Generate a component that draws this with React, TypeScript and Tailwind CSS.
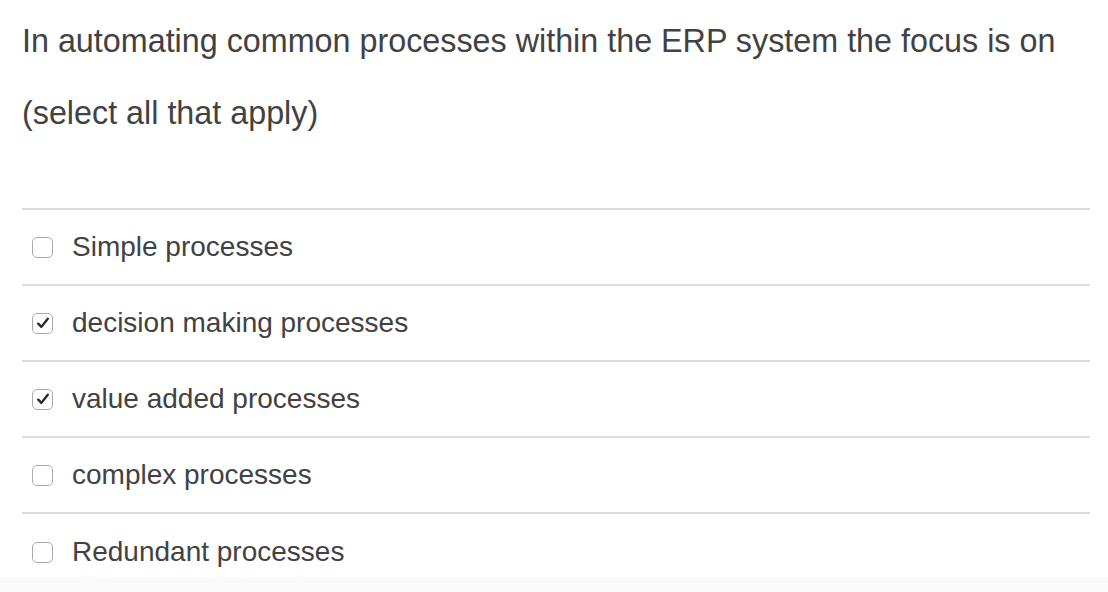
import { useState } from "react";

const OPTIONS = [
  { label: "Simple processes", checked: false },
  { label: "decision making processes", checked: true },
  { label: "value added processes", checked: true },
  { label: "complex processes", checked: false },
  { label: "Redundant processes", checked: false },
];

export default function App() {
  const [values, setValues] = useState(OPTIONS.map((o) => o.checked));

  return (
    <div className="relative h-[592px] w-[1108px] overflow-hidden bg-[#fafafa] font-['Liberation_Sans',Arial,sans-serif] text-[#424242]">
      <div className="h-[577px] bg-white px-[22px] pt-[21px]">
        <p className="text-[32.3px] leading-[40px] whitespace-nowrap">
          In automating common processes within the ERP system the focus is on
        </p>
        <p className="mt-[32px] text-[32.3px] leading-[40px]">(select all that apply)</p>

        <ul className="mt-[75px] w-[1068px] border-t-2 border-[#dcdcdc]">
          {OPTIONS.map((o, i) => (
            <li
              key={o.label}
              className={"flex h-[76px] items-center " + (i < OPTIONS.length - 1 ? "border-b-2 border-[#dcdcdc]" : "")}
            >
              <button
                onClick={() => setValues((v) => v.map((x, j) => (j === i ? !x : x)))}
                className="ml-[10px] flex h-[21px] w-[21px] items-center justify-center rounded-[5px] border border-[#ababab] bg-white"
              >
                {values[i] && (
                  <svg width="16" height="16" viewBox="0 0 14 14">
                    <path d="M2.8 7.6 L5.6 10.4 L11.2 3.2" fill="none" stroke="#2b2b2b" strokeWidth="2.1" strokeLinecap="round" strokeLinejoin="round" />
                  </svg>
                )}
              </button>
              <span className="ml-[19px] text-[28px]">{o.label}</span>
            </li>
          ))}
        </ul>
      </div>
    </div>
  );
}
